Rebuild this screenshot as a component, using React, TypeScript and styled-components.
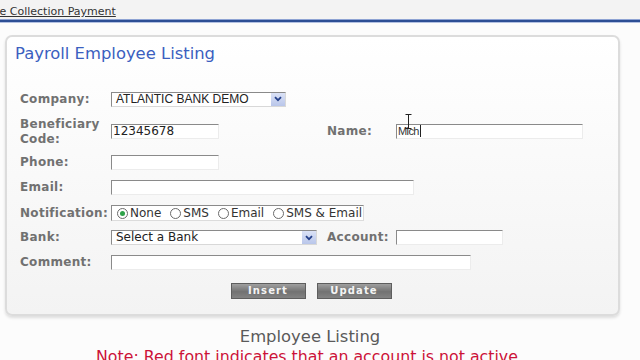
import React from 'react'
import styled, { createGlobalStyle } from 'styled-components'

const GlobalStyle = createGlobalStyle`
  html, body {
    margin: 0;
    padding: 0;
    background: #fcfcfc;
    font-family: "DejaVu Sans", Verdana, sans-serif;
    overflow: hidden;
  }
`

const Page = styled.div`
  width: 640px;
  height: 360px;
  position: relative;
  overflow: hidden;
`

const TopBar = styled.div`
  height: 19px;
  background: #f3f3f3;
  overflow: hidden;
  white-space: nowrap;
`

const TopLink = styled.a`
  display: inline-block;
  margin-left: -13px;
  font-size: 11px;
  line-height: 13px;
  color: #333;
  text-decoration: underline;
`

const Rule = styled.div`
  height: 2px;
  border-top: 1px solid #8ea3d3;
  border-bottom: 1px solid #b3c1e2;
  background: #2d4f95;
`

const Card = styled.section`
  margin: 12px 0 0 5px;
  width: 611px;
  border: 2px solid #dcdcdc;
  border-radius: 7px;
  background: linear-gradient(#ffffff, #f3f3f3);
  box-shadow: 0 2px 3px rgba(0, 0, 0, 0.12);
  padding: 0 0 15px 0;
  box-sizing: content-box;
`

const Title = styled.h1`
  margin: 0;
  padding: 7px 0 0 8px;
  font-size: 16.4px;
  line-height: 20px;
  font-weight: normal;
  color: #3b5fc0;
`

const Form = styled.div`
  margin-top: 21px;
  padding-left: 13px;
  display: flex;
  flex-direction: column;
`

const Row = styled.div<{ $h: number }>`
  display: flex;
  align-items: center;
  height: ${p => p.$h}px;
`

const Label = styled.label<{ $w: number }>`
  width: ${p => p.$w}px;
  flex: none;
  font-size: 12px;
  line-height: 15px;
  font-weight: bold;
  letter-spacing: 0.3px;
  color: #717171;
`

const Cell = styled.div<{ $w: number }>`
  width: ${p => p.$w}px;
  flex: none;
  display: flex;
  align-items: center;
  position: relative;
`

const Input = styled.div<{ $w: number; $font?: string }>`
  width: ${p => p.$w}px;
  height: 15px;
  box-sizing: border-box;
  border-top: 1px solid #8a8a8a;
  border-left: 1px solid #8a8a8a;
  border-right: 1px solid #ececec;
  border-bottom: 1px solid #ececec;
  background: #fff;
  font-family: ${p => p.$font || '"DejaVu Sans", Verdana, sans-serif'};
  font-size: 12px;
  line-height: 13px;
  color: #222;
  padding-left: 1px;
  white-space: nowrap;
  overflow: hidden;
  position: relative;
`

const SelectBox = styled(Input)`
  display: flex;
  align-items: center;
  justify-content: space-between;
  padding-left: 4px;
  border-right: 1px solid #d8d8d8;
  border-bottom: 1px solid #d8d8d8;
`

const Arrow = styled.span`
  width: 14px;
  height: 13px;
  flex: none;
  background: linear-gradient(#dbe2f6, #b9c6ea);
  display: flex;
  align-items: center;
  justify-content: center;
`

const NameText = styled.span`
  font-family: "Liberation Sans", Arial, sans-serif;
  font-size: 11px;
  letter-spacing: -0.6px;
  color: #333;
  border-right: 1px solid #222;
  padding-right: 1px;
`

const RadioGroup = styled.div`
  width: max-content;
  height: 16px;
  box-sizing: border-box;
  border-top: 1px solid #8a8a8a;
  border-left: 1px solid #8a8a8a;
  border-right: 1px solid #dcdcdc;
  border-bottom: 1px solid #dcdcdc;
  display: flex;
  align-items: center;
  gap: 9px;
  padding: 0 1px 0 5px;
  background: #fff;
`

const RadioItem = styled.span`
  display: flex;
  align-items: center;
  gap: 2px;
  white-space: nowrap;
  font-size: 12px;
  line-height: 14px;
  color: #333;
`

const Dot = styled.span<{ $on?: boolean }>`
  width: 11px;
  height: 11px;
  flex: none;
  box-sizing: border-box;
  border-radius: 50%;
  border: 1px solid #6a6a6a;
  background: #fff;
  display: flex;
  align-items: center;
  justify-content: center;
  &::after {
    content: '';
    width: 5px;
    height: 5px;
    border-radius: 50%;
    background: ${p => (p.$on ? '#2fa34a' : 'transparent')};
  }
`

const Buttons = styled.div`
  margin-top: 8px;
  display: flex;
  justify-content: center;
  gap: 11px;
  padding-right: 3px;
`

const Button = styled.button`
  width: 75px;
  height: 16px;
  padding: 0;
  border: 1px solid #5e5e5e;
  background: linear-gradient(#a0a0a0, #727272 55%, #828282);
  color: #f4f4f4;
  font-family: "DejaVu Sans", Verdana, sans-serif;
  font-size: 10px;
  font-weight: bold;
  letter-spacing: 1.1px;
  line-height: 14px;
`

const ListTitle = styled.h2`
  margin: 11px 0 0 0;
  width: 620px;
  text-align: center;
  font-size: 16.4px;
  line-height: 20px;
  font-weight: normal;
  color: #5a5a5a;
`

const Note = styled.p`
  margin: 0;
  width: 614px;
  text-align: center;
  font-size: 15.8px;
  line-height: 20px;
  white-space: nowrap;
  color: #cc1238;
`

const Pointer = styled.svg`
  position: absolute;
  left: 405px;
  top: 114px;
`

const Chevron = () => (
  <svg width="8" height="6" viewBox="0 0 8 6">
    <path d="M1 1.2 L4 4.2 L7 1.2" fill="none" stroke="#25408a" strokeWidth="1.8" />
  </svg>
)

export default function App() {
  return (
    <Page>
      <GlobalStyle />
      <TopBar>
        <TopLink>Fee Collection Payment</TopLink>
      </TopBar>
      <Rule />
      <Card>
        <Title>Payroll Employee Listing</Title>
        <Form>
          <Row $h={28}>
            <Label $w={91}>Company:</Label>
            <Cell $w={216}>
              <SelectBox $w={175} $font='"Liberation Sans", Arial, sans-serif'>
                ATLANTIC BANK DEMO
                <Arrow><Chevron /></Arrow>
              </SelectBox>
            </Cell>
          </Row>
          <Row $h={37}>
            <Label $w={91}>Beneficiary<br />Code:</Label>
            <Cell $w={216}>
              <Input $w={108}>12345678</Input>
            </Cell>
            <Label $w={69}>Name:</Label>
            <Cell $w={190}>
              <Input $w={187}><NameText>Mich</NameText></Input>
            </Cell>
          </Row>
          <Row $h={24}>
            <Label $w={91}>Phone:</Label>
            <Cell $w={216}>
              <Input $w={108} />
            </Cell>
          </Row>
          <Row $h={26}>
            <Label $w={91}>Email:</Label>
            <Cell $w={310}>
              <Input $w={303} />
            </Cell>
          </Row>
          <Row $h={26}>
            <Label $w={91}>Notification:</Label>
            <Cell $w={270}>
              <RadioGroup>
                <RadioItem><Dot $on />None</RadioItem>
                <RadioItem><Dot />SMS</RadioItem>
                <RadioItem><Dot />Email</RadioItem>
                <RadioItem><Dot />SMS &amp; Email</RadioItem>
              </RadioGroup>
            </Cell>
          </Row>
          <Row $h={23}>
            <Label $w={91}>Bank:</Label>
            <Cell $w={216}>
              <SelectBox $w={206}>
                Select a Bank
                <Arrow><Chevron /></Arrow>
              </SelectBox>
            </Cell>
            <Label $w={69}>Account:</Label>
            <Cell $w={110}>
              <Input $w={107} />
            </Cell>
          </Row>
          <Row $h={26}>
            <Label $w={91}>Comment:</Label>
            <Cell $w={365}>
              <Input $w={360} />
            </Cell>
          </Row>
        </Form>
        <Buttons>
          <Button>Insert</Button>
          <Button>Update</Button>
        </Buttons>
      </Card>
      <ListTitle>Employee Listing</ListTitle>
      <Note>Note: Red font indicates that an account is not active</Note>
      <Pointer width="7" height="15" viewBox="0 0 7 15">
        <path d="M0.5 0.5 H6.5 M3.5 0.5 V14.5 M0.5 14.5 H6.5" stroke="#222" strokeWidth="1" fill="none" />
      </Pointer>
    </Page>
  )
}
